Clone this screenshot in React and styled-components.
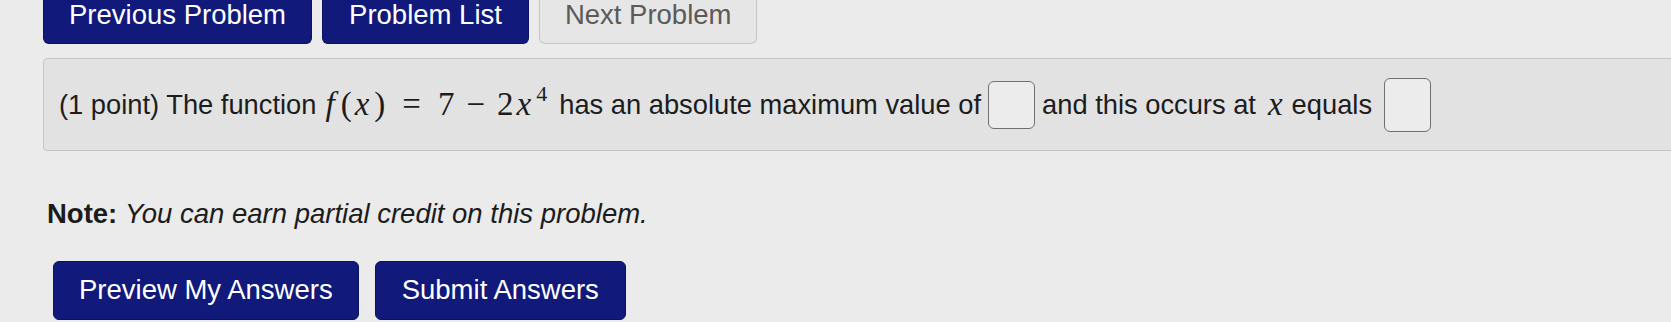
import React from "react";
import styled, { createGlobalStyle } from "styled-components";

const Global = createGlobalStyle`
  html, body { margin: 0; padding: 0; background: #ebebeb; }
  body { font-family: "Liberation Sans", Arial, Helvetica, sans-serif; color: #1c1c1c; }
  #root { width: 1671px; height: 322px; overflow: hidden; }
`;

const Page = styled.div`
  width: 1720px;
  padding-left: 43px;
  box-sizing: border-box;
  display: flex;
  flex-direction: column;
`;

const NavRow = styled.div`
  display: flex;
  gap: 10px;
`;

const Button = styled.button`
  height: ${(p) => (p.$nav ? 44 : 59)}px;
  padding: 0 ${(p) => p.$pad || 25}px ${(p) => (p.$nav ? 15 : 0)}px;
  border-radius: ${(p) => (p.$nav ? "0 0 6px 6px" : "6px")};
  font-family: "Liberation Sans", Arial, sans-serif;
  font-size: 27.5px;
  line-height: 1;
  display: flex;
  align-items: ${(p) => (p.$nav ? "flex-end" : "center")};
  justify-content: center;
  cursor: pointer;
  background: ${(p) => (p.$disabled ? "#e6e6e6" : "#111a7a")};
  color: ${(p) => (p.$disabled ? "#5a5a5a" : "#ffffff")};
  border: 1px solid ${(p) => (p.$disabled ? "#c6c6c6" : "#0b1260")};
  border-top: ${(p) => (p.$nav ? "none" : "")};
  box-sizing: border-box;
  white-space: nowrap;
`;

const ProblemBox = styled.div`
  margin-top: 14px;
  height: 93px;
  background: #e2e2e2;
  border: 1px solid #c5c5c5;
  border-radius: 4px;
  box-sizing: border-box;
  padding-left: 15px;
  display: flex;
  align-items: center;
  font-size: 27.3px;
  white-space: nowrap;
`;

const MathExpr = styled.span`
  font-family: "Liberation Serif", "Times New Roman", serif;
  font-size: 33px;
  line-height: 1;
  margin: 0 ${(p) => p.$mr || 12}px 0 ${(p) => p.$ml || 9}px;
`;

const Var = styled.i`
  font-style: italic;
  margin: 0 ${(p) => p.$mr || 0}px 0 ${(p) => p.$ml || 0}px;
`;

const Op = styled.span`
  margin: 0 ${(p) => p.$space}px;
`;

const Sup = styled.sup`
  font-size: 22px;
  vertical-align: 14px;
  line-height: 0;
  margin-left: 5px;
`;

const AnswerBox = styled.input`
  width: 47px;
  height: ${(p) => p.$h || 50}px;
  box-sizing: border-box;
  border: 1.5px solid #707070;
  border-radius: 6px;
  background: #ececec;
  margin: 0 ${(p) => p.$mr || 7}px 0 ${(p) => p.$ml || 7}px;
  padding: 0;
`;

const Note = styled.p`
  margin: 49px 0 0 4px;
  font-size: 27.5px;
  line-height: 1;
`;

const Bold = styled.b`
  font-weight: bold;
`;

const Italic = styled.i`
  font-style: italic;
`;

const ActionRow = styled.div`
  display: flex;
  gap: 16px;
  margin-top: 33px;
  margin-left: 10px;
`;

export default function App() {
  return (
    <>
      <Global />
      <Page>
        <NavRow>
          <Button $nav $pad={25}>Previous Problem</Button>
          <Button $nav $pad={26}>Problem List</Button>
          <Button $nav $pad={25} $disabled>Next Problem</Button>
        </NavRow>
        <ProblemBox>
          (1 point) The function
          <MathExpr>
            <Var $mr={6}>f</Var>(<Var $ml={3} $mr={5}>x</Var>)<Op $space={17}>=</Op>7<Op $space={12}>−</Op>2<Var $ml={3}>x</Var>
            <Sup>4</Sup>
          </MathExpr>
          has an absolute maximum value of
          <AnswerBox $h={48} aria-label="maximum value" />
          and this occurs at
          <MathExpr $ml={12} $mr={9}>
            <Var>x</Var>
          </MathExpr>
          equals
          <AnswerBox $h={54} $ml={12} aria-label="x value" />
        </ProblemBox>
        <Note>
          <Bold>Note:</Bold> <Italic>You can earn partial credit on this problem.</Italic>
        </Note>
        <ActionRow>
          <Button $pad={25}>Preview My Answers</Button>
          <Button $pad={26}>Submit Answers</Button>
        </ActionRow>
      </Page>
    </>
  );
}
